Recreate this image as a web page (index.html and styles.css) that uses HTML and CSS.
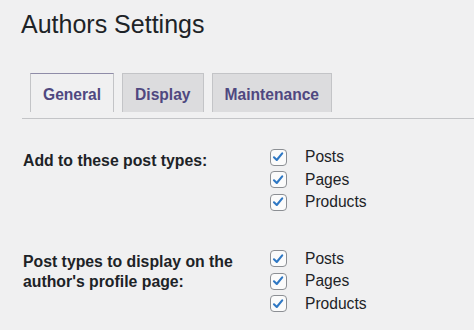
FILE: index.html
```html
<!DOCTYPE html>
<html lang="en">
<head>
<meta charset="utf-8">
<title>Authors Settings</title>
<link rel="stylesheet" href="styles.css">
</head>
<body>
<div class="wrap">
  <h1 class="title">Authors Settings</h1>
  <nav class="tabs">
    <a class="tab active">General</a>
    <a class="tab">Display</a>
    <a class="tab">Maintenance</a>
  </nav>
  <div class="form">
    <div class="row first">
      <div class="th">Add to these post types:</div>
      <div class="td">
        <label class="opt"><span class="cb"><svg viewBox="0 0 16 16"><path d="M3.4 8.3 L6.6 11.4 L12.8 3.9" /></svg></span>Posts</label>
        <label class="opt"><span class="cb"><svg viewBox="0 0 16 16"><path d="M3.4 8.3 L6.6 11.4 L12.8 3.9" /></svg></span>Pages</label>
        <label class="opt"><span class="cb"><svg viewBox="0 0 16 16"><path d="M3.4 8.3 L6.6 11.4 L12.8 3.9" /></svg></span>Products</label>
      </div>
    </div>
    <div class="row second">
      <div class="th">Post types to display on the author's profile page:</div>
      <div class="td">
        <label class="opt"><span class="cb"><svg viewBox="0 0 16 16"><path d="M3.4 8.3 L6.6 11.4 L12.8 3.9" /></svg></span>Posts</label>
        <label class="opt"><span class="cb"><svg viewBox="0 0 16 16"><path d="M3.4 8.3 L6.6 11.4 L12.8 3.9" /></svg></span>Pages</label>
        <label class="opt"><span class="cb"><svg viewBox="0 0 16 16"><path d="M3.4 8.3 L6.6 11.4 L12.8 3.9" /></svg></span>Products</label>
      </div>
    </div>
  </div>
</div>
</body>
</html>
```
FILE: styles.css
```css
html, body {
  margin: 0;
  padding: 0;
  background: #f0f0f1;
}
body {
  font-family: "Liberation Sans", Arial, sans-serif;
  color: #1d2327;
}
.wrap {
  padding: 9px 0 0 21px;
}
.title {
  margin: 0;
  font-size: 25px;
  line-height: 30px;
  font-weight: 400;
  color: #1d2327;
}
.tabs {
  display: flex;
  gap: 8px;
  margin: 34px 0 0 1px;
  padding: 0 0 6px 8px;
  border-bottom: 1px solid #c3c4c7;
}
.tab {
  display: block;
  box-sizing: border-box;
  height: 39px;
  line-height: 39px;
  padding: 1px 12px 0;
  font-size: 15.6px;
  font-weight: 700;
  color: #4f4880;
  background: #dcdcde;
  border: 1px solid #c3c4c7;
  border-bottom: none;
}
.tab.active {
  background: #f0f0f1;
  border-top-color: #8f8ca8;
}
.form {
  padding-left: 2px;
}
.row {
  display: flex;
  align-items: flex-start;
}
.row.first {
  margin-top: 27px;
}
.row.second {
  margin-top: 34px;
}
.th {
  box-sizing: border-box;
  width: 247px;
  padding: 4.5px 10px 0 0;
  font-size: 15.8px;
  line-height: 19.5px;
  font-weight: 700;
  color: #1d2327;
}
.td {
  display: flex;
  flex-direction: column;
}
.opt {
  display: flex;
  align-items: center;
  height: 22.5px;
  font-size: 15.6px;
  color: #1d2327;
}
.cb {
  box-sizing: border-box;
  width: 17px;
  height: 17px;
  margin-left: -0.5px;
  margin-right: 18.5px;
  border: 1.5px solid #8c8f94;
  border-radius: 4px;
  background: #fbfbfb;
  display: flex;
  align-items: center;
  justify-content: center;
}
.cb svg {
  display: block;
  width: 14px;
  height: 14px;
  fill: none;
  stroke: #2f78c4;
  stroke-width: 2.4;
  stroke-linecap: round;
  stroke-linejoin: round;
}
```
